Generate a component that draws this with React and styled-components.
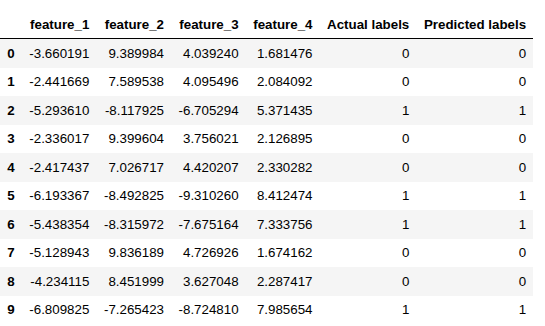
import styled, { createGlobalStyle } from "styled-components";

const GlobalStyle = createGlobalStyle`
  body {
    margin: 0;
    background: #fff;
    font-family: "Liberation Sans", Arial, sans-serif;
  }
`;

const Wrap = styled.div`
  padding-top: 10px;
`;

const Table = styled.table`
  border-collapse: collapse;
  border-spacing: 0;
  font-size: 13.33px;
  color: #000;
`;

const HeadCell = styled.th`
  font-weight: bold;
  text-align: right;
  padding: 0 7.3px;
  height: 28px;
  white-space: nowrap;
  border-bottom: 1px solid #000;
`;

const Row = styled.tr`
  background: ${(p) => (p.$striped ? "#f5f5f5" : "#fff")};
`;

const IndexCell = styled.th`
  font-weight: bold;
  text-align: left;
  padding: 0 7.3px;
  height: 28.5px;
`;

const Cell = styled.td`
  text-align: right;
  padding: 0 7.3px;
  height: 28.5px;
  white-space: nowrap;
`;

const columns = [
  "feature_1",
  "feature_2",
  "feature_3",
  "feature_4",
  "Actual labels",
  "Predicted labels",
];

const rows = [
  ["-3.660191", "9.389984", "4.039240", "1.681476", 0, 0],
  ["-2.441669", "7.589538", "4.095496", "2.084092", 0, 0],
  ["-5.293610", "-8.117925", "-6.705294", "5.371435", 1, 1],
  ["-2.336017", "9.399604", "3.756021", "2.126895", 0, 0],
  ["-2.417437", "7.026717", "4.420207", "2.330282", 0, 0],
  ["-6.193367", "-8.492825", "-9.310260", "8.412474", 1, 1],
  ["-5.438354", "-8.315972", "-7.675164", "7.333756", 1, 1],
  ["-5.128943", "9.836189", "4.726926", "1.674162", 0, 0],
  ["-4.234115", "8.451999", "3.627048", "2.287417", 0, 0],
  ["-6.809825", "-7.265423", "-8.724810", "7.985654", 1, 1],
];

const App = () => {
  return (
    <Wrap>
      <GlobalStyle />
      <Table>
        <thead>
          <tr>
            <HeadCell />
            {columns.map((c) => (
              <HeadCell key={c}>{c}</HeadCell>
            ))}
          </tr>
        </thead>
        <tbody>
          {rows.map((r, i) => (
            <Row key={i} $striped={i % 2 === 0}>
              <IndexCell>{i}</IndexCell>
              {r.map((v, j) => (
                <Cell key={j}>{v}</Cell>
              ))}
            </Row>
          ))}
        </tbody>
      </Table>
    </Wrap>
  );
};

export default App;
